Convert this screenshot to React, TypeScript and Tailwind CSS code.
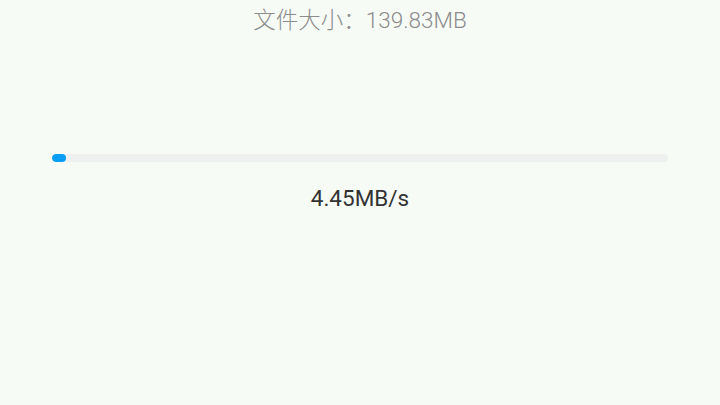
export default function App() {
  const progress = 2.3;
  return (
    <div
      className="w-[720px] h-[405px] bg-[#f7fbf6] flex flex-col items-center overflow-hidden"
      style={{ fontFamily: '"Roboto", "Noto Sans CJK SC", sans-serif' }}
    >
      <div className="mt-[5px] h-[30px] leading-[30px] text-[22.5px] font-light text-[#8c8c8c]">文件大小：139.83MB</div>
      <div className="mt-[119px] w-[616px] h-[8px] rounded-full bg-[#eef1ef] overflow-hidden">
        <div className="h-full rounded-full bg-[#0a9df4]" style={{ width: `${progress}%` }} />
      </div>
      <div className="mt-[21px] h-[30px] leading-[30px] text-[22.5px] text-[#333333]">4.45MB/s</div>
    </div>
  );
}
